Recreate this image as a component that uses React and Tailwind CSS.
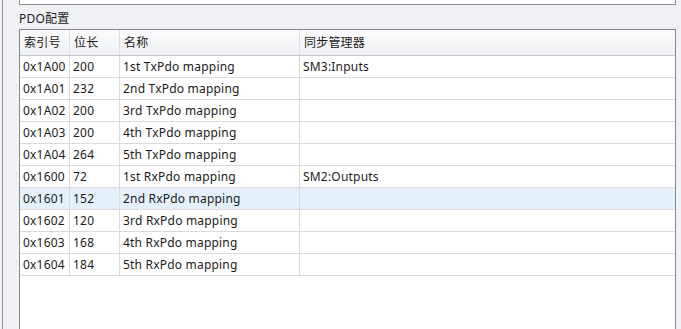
const ROWS = [
  { idx: '0x1A00', len: '200', name: '1st TxPdo mapping', sm: 'SM3:Inputs' },
  { idx: '0x1A01', len: '232', name: '2nd TxPdo mapping', sm: '' },
  { idx: '0x1A02', len: '200', name: '3rd TxPdo mapping', sm: '' },
  { idx: '0x1A03', len: '200', name: '4th TxPdo mapping', sm: '' },
  { idx: '0x1A04', len: '264', name: '5th TxPdo mapping', sm: '' },
  { idx: '0x1600', len: '72', name: '1st RxPdo mapping', sm: 'SM2:Outputs' },
  { idx: '0x1601', len: '152', name: '2nd RxPdo mapping', sm: '', selected: true },
  { idx: '0x1602', len: '120', name: '3rd RxPdo mapping', sm: '' },
  { idx: '0x1603', len: '168', name: '4th RxPdo mapping', sm: '' },
  { idx: '0x1604', len: '184', name: '5th RxPdo mapping', sm: '' },
]

const FONT = 'font-["Noto_Sans","Noto_Sans_CJK_SC",sans-serif]'

export default function App() {
  return (
    <div className={`w-[681px] h-[329px] overflow-hidden bg-[#f0f1f5] flex text-[12px] tracking-[0.2px] text-[#1b1b1b] ${FONT}`}>
      {/* outer group edge */}
      <div className="w-[2px] shrink-0" />
      <div className="w-px shrink-0 bg-[#8d8f99]" />

      <div className="flex-1 pl-[16px] pr-[5px] flex flex-col">
        {/* bottom of the panel above */}
        <div className="h-[5px] shrink-0 bg-white border-x border-b border-[#8d8f99]" />

        <div className="h-[24px] shrink-0 flex items-center pt-[4px] leading-none">PDO配置</div>

        {/* grid */}
        <div className="flex-1 bg-white border-x border-t border-[#828790] flex flex-col">
          <div className="h-[26px] shrink-0 flex border-b border-[#c3c6cc] bg-gradient-to-b from-[#fbfbfc] to-[#eff1f4]">
            <div className="w-[50px] shrink-0 border-r border-[#dcdee2] flex items-center pl-[4px]">索引号</div>
            <div className="w-[50px] shrink-0 border-r border-[#dcdee2] flex items-center pl-[4px]">位长</div>
            <div className="w-[180px] shrink-0 border-r border-[#dcdee2] flex items-center pl-[4px]">名称</div>
            <div className="flex-1 flex items-center pl-[4px]">同步管理器</div>
          </div>

          {ROWS.map(r => (
            <div
              key={r.idx}
              className={`h-[22px] shrink-0 flex border-b border-[#dadada] ${r.selected ? 'bg-[#e4f1fc]' : ''}`}
            >
              <div className="w-[50px] shrink-0 border-r border-[#dadada] flex items-center pl-[3px] whitespace-nowrap">{r.idx}</div>
              <div className="w-[50px] shrink-0 border-r border-[#dadada] flex items-center pl-[3px]">{r.len}</div>
              <div className="w-[180px] shrink-0 border-r border-[#dadada] flex items-center pl-[3px] whitespace-nowrap">{r.name}</div>
              <div className="flex-1 flex items-center pl-[3px]">{r.sm}</div>
            </div>
          ))}
        </div>
      </div>
    </div>
  )
}
